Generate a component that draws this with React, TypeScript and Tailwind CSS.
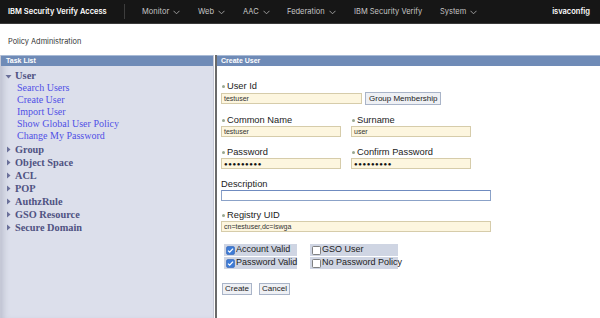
import React from "react";

const Chev = () => (
  <svg width="7" height="5" viewBox="0 0 7 5" className="ml-[4px] mt-[1px]" fill="none">
    <path d="M0.5 0.8 L3.5 3.8 L6.5 0.8" stroke="#a8a8a8" strokeWidth="0.9" />
  </svg>
);

const NavItem = ({ label, chev = true, cls = "" }: { label: string; chev?: boolean; cls?: string }) => (
  <div className={`flex items-center text-[#c6c6c6] whitespace-nowrap ${cls}`}>
    <span>{label}</span>
    {chev && <Chev />}
  </div>
);

const Tri = ({ open }: { open?: boolean }) =>
  open ? (
    <svg width="7" height="7" viewBox="0 0 7 7" className="mr-[3px]">
      <path d="M0.5 2 L6.5 2 L3.5 5.5 Z" fill="#6a6f99" />
    </svg>
  ) : (
    <svg width="7" height="7" viewBox="0 0 7 7" className="mr-[3px]">
      <path d="M2 0.5 L5.5 3.5 L2 6.5 Z" fill="#6a6f99" />
    </svg>
  );

const Req = () => <span className="w-[3px] h-[3px] rounded-full bg-[#9aa890] mr-[2px] ml-[1px] shrink-0" />;

const Label = ({ text, req = true }: { text: string; req?: boolean }) => (
  <div className="text-[9.3px] leading-[10px] text-[#222] flex items-center h-[10px] whitespace-nowrap">
    {req && <Req />}
    {text}
  </div>
);

const CInput = ({ value, w, dots }: { value: string; w: string; dots?: boolean }) => (
  <div
    className={`${w} h-[11px] bg-[#fdf6df] border border-[#d6ccaa] flex items-center px-[2px] text-[7px] text-[#333] leading-none`}
  >
    {dots ? <span className="text-[6px] tracking-[0.6px] text-[#111]">●●●●●●●●●</span> : value}
  </div>
);

const Check = ({ checked, label, w }: { checked?: boolean; label: string; w: string }) => (
  <div className={`${w} h-[12px] bg-[#cfd5e3] flex items-center pl-[2px] text-[9px] text-[#222] whitespace-nowrap`}>
    {checked ? (
      <svg width="9" height="9" viewBox="0 0 9 9" className="mr-[1px] shrink-0">
        <rect x="0.5" y="0.5" width="8" height="8" rx="1.5" fill="#3d7bd6" stroke="#2f63b5" strokeWidth="0.6" />
        <path d="M2 4.6 L3.7 6.2 L7 2.6" stroke="white" strokeWidth="1.3" fill="none" />
      </svg>
    ) : (
      <svg width="9" height="9" viewBox="0 0 9 9" className="mr-[1px] shrink-0">
        <rect x="0.5" y="0.5" width="8" height="8" rx="1" fill="white" stroke="#666" strokeWidth="0.8" />
      </svg>
    )}
    {label}
  </div>
);

const Btn = ({ label, cls = "" }: { label: string; cls?: string }) => (
  <div
    className={`h-[12px] px-[2px] bg-[#eef0f4] border border-[#a9b4c8] flex items-center text-[8px] text-[#222] whitespace-nowrap ${cls}`}
  >
    {label}
  </div>
);

export default function App() {
  const serif = { fontFamily: '"Liberation Serif", "DejaVu Serif", serif' };
  const sans = { fontFamily: '"Liberation Sans", Arial, sans-serif' };
  const ui = { fontFamily: '"Inter", "Open Sans", sans-serif' };
  return (
    <div className="w-[600px] h-[318px] overflow-hidden bg-white flex flex-col" style={sans}>
      {/* top nav */}
      <div className="h-[24px] bg-[#161616] border-b border-[#3a3a3a] flex items-center text-[7.5px] shrink-0" style={ui}>
        <div className="pl-[8px] w-[124px] text-white font-semibold whitespace-nowrap">IBM Security Verify Access</div>
        <div className="w-px h-[15px] bg-[#3d3d3d]" />
        <NavItem label="Monitor" cls="ml-[17px] w-[56px]" />
        <NavItem label="Web" cls="w-[45px]" />
        <NavItem label="AAC" cls="w-[44px]" />
        <NavItem label="Federation" cls="w-[67px]" />
        <NavItem label="IBM Security Verify" chev={false} cls="w-[86px]" />
        <NavItem label="System" />
        <div className="ml-auto mr-[10px] text-white font-semibold">isvaconfig</div>
      </div>

      {/* title */}
      <div className="h-[31px] flex items-center pl-[8px] pt-[5px] text-[7.4px] text-[#333] shrink-0" style={ui}>
        Policy Administration
      </div>

      {/* panels */}
      <div className="flex flex-1 min-h-0">
        {/* left */}
        <div
          className="w-[214px] bg-[#dcdfeb] border-l border-r border-[#c5c8d6] flex flex-col"
          style={{ boxShadow: "inset 6px 0 6px -4px rgba(120,125,150,0.35)" }}
        >
          <div className="h-[11px] bg-[#6f8bb7] border-t border-[#a9bbd6] text-white text-[7px] font-bold flex items-center pl-[5px]">
            Task List
          </div>
          <div className="pl-[4px] pt-[4px]" style={serif}>
            <div className="flex items-center h-[12px] text-[#4f5282] font-bold text-[10.5px]">
              <Tri open />
              User
            </div>
            <div className="pl-[12px] text-[#5050e6] text-[10px] leading-[12px]">
              <div>Search Users</div>
              <div>Create User</div>
              <div>Import User</div>
              <div>Show Global User Policy</div>
              <div>Change My Password</div>
            </div>
            <div className="pt-[1px]">
              {["Group", "Object Space", "ACL", "POP", "AuthzRule", "GSO Resource", "Secure Domain"].map((t) => (
                <div key={t} className="flex items-center h-[13px] text-[#4f5282] font-bold text-[10.3px]">
                  <Tri />
                  {t}
                </div>
              ))}
            </div>
          </div>
        </div>
        <div className="w-[1px] bg-white" />
        {/* right */}
        <div className="flex-1 border-l-[2px] border-[#6a6a6a] flex flex-col">
          <div className="h-[11px] bg-[#6f8bb7] border-t border-[#a9bbd6] text-white text-[7px] font-bold flex items-center pl-[4px]">
            Create User
          </div>
          <div className="pl-[4px] pt-[15px] flex flex-col">
            <Label text="User Id" />
            <div className="flex items-center mt-[1px]">
              <CInput value="testuser" w="w-[141px]" />
              <Btn label="Group Membership" cls="ml-[3px] h-[13px] px-[3px]" />
            </div>

            <div className="flex mt-[10px]">
              <div className="w-[130px]">
                <Label text="Common Name" />
                <div className="mt-[1px]">
                  <CInput value="testuser" w="w-[120px]" />
                </div>
              </div>
              <div>
                <Label text="Surname" />
                <div className="mt-[1px]">
                  <CInput value="user" w="w-[120px]" />
                </div>
              </div>
            </div>

            <div className="flex mt-[10px]">
              <div className="w-[130px]">
                <Label text="Password" />
                <div className="mt-[1px]">
                  <CInput value="" dots w="w-[120px]" />
                </div>
              </div>
              <div>
                <Label text="Confirm Password" />
                <div className="mt-[1px]">
                  <CInput value="" dots w="w-[120px]" />
                </div>
              </div>
            </div>

            <div className="mt-[10px]">
              <Label text="Description" req={false} />
              <div className="mt-[1px] w-[270px] h-[11px] bg-white border border-[#8ba2c8] border-t-[#6f8bc0]" />
            </div>

            <div className="mt-[9px]">
              <Label text="Registry UID" />
              <div className="mt-[1px]">
                <CInput value="cn=testuser,dc=iswga" w="w-[270px]" />
              </div>
            </div>

            <div className="mt-[12px] pl-[3px] flex flex-col gap-[1px]">
              <div className="flex gap-[13px]">
                <Check checked label="Account Valid" w="w-[73px]" />
                <Check label="GSO User" w="w-[88px]" />
              </div>
              <div className="flex gap-[13px]">
                <Check checked label="Password Valid" w="w-[73px]" />
                <Check label="No Password Policy" w="w-[88px]" />
              </div>
            </div>

            <div className="mt-[14px] pl-[1px] flex gap-[7px]">
              <Btn label="Create" />
              <Btn label="Cancel" />
            </div>
          </div>
        </div>
      </div>
    </div>
  );
}
